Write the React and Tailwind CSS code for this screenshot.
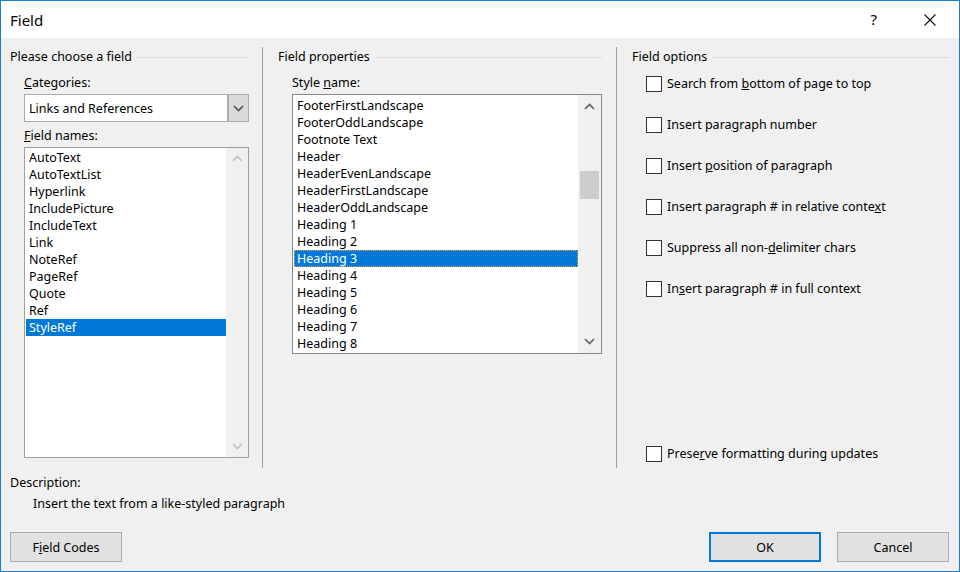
import React from 'react';

const font = { fontFamily: '"Noto Sans", "Segoe UI", sans-serif' };

const fieldNames = ['AutoText', 'AutoTextList', 'Hyperlink', 'IncludePicture', 'IncludeText', 'Link', 'NoteRef', 'PageRef', 'Quote', 'Ref', 'StyleRef'];

const styleNames = ['FooterFirstLandscape', 'FooterOddLandscape', 'Footnote Text', 'Header', 'HeaderEvenLandscape', 'HeaderFirstLandscape', 'HeaderOddLandscape', 'Heading 1', 'Heading 2', 'Heading 3', 'Heading 4', 'Heading 5', 'Heading 6', 'Heading 7', 'Heading 8'];

function Chevron({ up, color = '#606060' }) {
  return (
    <svg width="11" height="7" viewBox="0 0 11 7" className="block">
      <path d={up ? 'M1 6 L5.5 1.5 L10 6' : 'M1 1 L5.5 5.5 L10 1'} fill="none" stroke={color} strokeWidth="1.6" />
    </svg>
  );
}

function GroupHeader({ children }) {
  return (
    <div className="flex items-center h-[17px]">
      <span className="whitespace-nowrap">{children}</span>
      <div className="flex-1 h-px bg-[#dcdcdc] ml-[5px] mt-[1px]" />
    </div>
  );
}

function Check({ children, className = '' }) {
  return (
    <div className={`flex items-center h-[17px] ${className}`}>
      <div className="w-[16px] h-[16px] border border-[#333333] bg-white shrink-0" />
      <span className="ml-[5px] whitespace-nowrap">{children}</span>
    </div>
  );
}

function Button({ children, primary }) {
  return (
    <button
      className={`w-[112px] h-[30px] bg-[#e1e1e1] text-black ${primary ? 'border-2 border-[#0078d7]' : 'border border-[#adadad]'}`}
    >
      {children}
    </button>
  );
}

export default function App() {
  return (
    <div className="w-[960px] h-[572px] border border-[#1a7fd3] bg-[#f0f0f0] flex flex-col text-[12.5px] text-black leading-[17px]" style={font}>
      {/* Title bar */}
      <div className="h-[37px] bg-white flex items-center shrink-0">
        <span className="ml-[9px] text-[15px] mt-[1px]">Field</span>
        <div className="flex-1" />
        <span className="text-[15px] mr-[47px]">?</span>
        <svg width="12" height="12" viewBox="0 0 12 12" className="mr-[23px]">
          <path d="M0.5 0.5 L11.5 11.5 M11.5 0.5 L0.5 11.5" stroke="#111" strokeWidth="1.1" />
        </svg>
      </div>

      {/* Main area */}
      <div className="flex pl-[9px] pt-[9px] h-[430px] shrink-0">
        {/* Column 1 */}
        <div className="w-[239px] pt-[1px]">
          <GroupHeader>Please choose a field</GroupHeader>
          <div className="pl-[14px]">
            <div className="mt-[9px]"><u>C</u>ategories:</div>
            <div className="mt-[3px] h-[28px] flex border border-[#acacac] bg-white">
              <div className="flex-1 flex items-center pl-[4px]">Links and References</div>
              <div className="w-[21px] bg-[#dadada] border-l-2 border-[#acacac] flex items-center justify-center">
                <Chevron color="#505050" />
              </div>
            </div>
            <div className="mt-[5px]"><u>F</u>ield names:</div>
            <div className="mt-[3px] h-[311px] flex border border-[#a0a0a0] bg-white">
              <div className="flex-1 pt-[1px] pl-[1px]">
                {fieldNames.map((n) => (
                  <div key={n} className={`h-[17px] pl-[3px] ${n === 'StyleRef' ? 'bg-[#0078d7] text-white' : ''}`}>{n}</div>
                ))}
              </div>
              <div className="w-[22px] bg-[#f0f0f0] flex flex-col items-center justify-between py-[7px]">
                <Chevron up color="#c0c0c0" />
                <Chevron color="#c0c0c0" />
              </div>
            </div>
          </div>
        </div>

        <div className="ml-[13px] w-px h-[421px] bg-[#a0a0a0]" />

        {/* Column 2 */}
        <div className="ml-[15px] w-[324px] pt-[1px]">
          <GroupHeader>Field properties</GroupHeader>
          <div className="pl-[14px]">
            <div className="mt-[9px]">Style <u>n</u>ame:</div>
            <div className="mt-[3px] h-[260px] flex border border-[#828790] bg-white overflow-hidden">
              <div className="flex-1 pt-[2px] pl-[1px]">
                {styleNames.map((n) => (
                  <div
                    key={n}
                    className={`h-[17px] pl-[3px] ${n === 'Heading 3' ? 'bg-[#0078d7] text-white outline-1 outline-dotted outline-[#f0a040] -outline-offset-1' : ''}`}
                  >
                    {n}
                  </div>
                ))}
              </div>
              <div className="w-[23px] bg-[#f0f0f0] flex flex-col items-center pt-[8px] pb-[8px]">
                <Chevron up />
                <div className="mt-[61px] w-[19px] h-[28px] bg-[#cdcdcd]" />
                <div className="flex-1" />
                <Chevron />
              </div>
            </div>
          </div>
        </div>

        <div className="ml-[14px] w-px h-[421px] bg-[#a0a0a0]" />

        {/* Column 3 */}
        <div className="ml-[15px] w-[318px] pt-[1px] flex flex-col h-[421px]">
          <GroupHeader>Field options</GroupHeader>
          <div className="pl-[14px] flex flex-col">
            <Check className="mt-[10px]">Search from <u>b</u>ottom of page to top</Check>
            <Check className="mt-[24px]">Insert para<u>g</u>raph number</Check>
            <Check className="mt-[24px]">Insert <u>p</u>osition of paragraph</Check>
            <Check className="mt-[24px]">Insert paragraph # in relative conte<u>x</u>t</Check>
            <Check className="mt-[24px]">Suppress all non-<u>d</u>elimiter chars</Check>
            <Check className="mt-[24px]">In<u>s</u>ert paragraph # in full context</Check>
            <Check className="mt-[148px]">Prese<u>r</u>ve formatting during updates</Check>
          </div>
        </div>
      </div>

      {/* Description */}
      <div className="pl-[9px] mt-[6px]">Description:</div>
      <div className="pl-[32px] mt-[4px]">Insert the text from a like-styled paragraph</div>

      {/* Buttons */}
      <div className="flex items-center pl-[9px] mt-[20px]">
        <Button>F<u>i</u>eld Codes</Button>
        <div className="flex-1" />
        <Button primary>OK</Button>
        <div className="w-[16px]" />
        <Button>Cancel</Button>
        <div className="w-[10px]" />
      </div>
    </div>
  );
}
